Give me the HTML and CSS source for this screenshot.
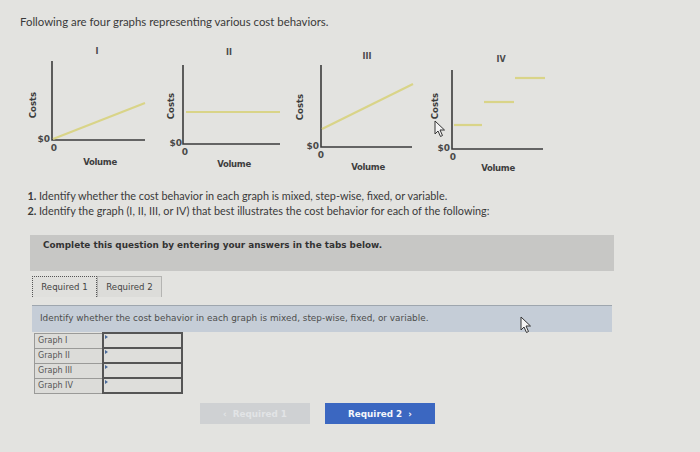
FILE: index.html
```html
<!DOCTYPE html>
<html>
<head>
<meta charset="utf-8">
<link rel="stylesheet" href="styles.css">
</head>
<body>
<div class="page">
  <p class="title">Following are four graphs representing various cost behaviors.</p>
  <svg class="figure" width="700" height="150" viewBox="0 30 700 150" xmlns="http://www.w3.org/2000/svg">
    <g class="axis" fill="none" stroke="#3b3b3b" stroke-width="1.6">
      <polyline points="52,61 52,140 145,140"/>
      <polyline points="183,65 183,144 280,144"/>
      <polyline points="321,65 321,147 412,147"/>
      <polyline points="452,70 452,149 543,149"/>
    </g>
    <g fill="none" stroke="#d9d488" stroke-width="2.2">
      <line x1="53" y1="139" x2="145" y2="103"/>
      <line x1="186" y1="112" x2="280" y2="112"/>
      <line x1="322" y1="129" x2="413" y2="84"/>
      <line x1="454" y1="125" x2="482" y2="125"/>
      <line x1="484" y1="102" x2="514" y2="102"/>
      <line x1="515" y1="78" x2="545" y2="78"/>
    </g>
    <g class="num" font-family="'DejaVu Sans', sans-serif" font-weight="bold" font-size="8" fill="#4a4a4a">
      <text x="97" y="54" text-anchor="middle">I</text>
      <text x="229" y="55" text-anchor="middle">II</text>
      <text x="367" y="59" text-anchor="middle">III</text>
      <text x="501" y="62" text-anchor="middle">IV</text>
    </g>
    <g font-family="'DejaVu Sans', sans-serif" font-weight="bold" font-size="8.5" fill="#3d3d3d">
      <text transform="translate(36,105) rotate(-90)" text-anchor="middle">Costs</text>
      <text transform="translate(174,106) rotate(-90)" text-anchor="middle">Costs</text>
      <text transform="translate(303,107) rotate(-90)" text-anchor="middle">Costs</text>
      <text transform="translate(438,106) rotate(-90)" text-anchor="middle">Costs</text>
      <text x="100" y="165" text-anchor="middle" letter-spacing="-0.3">Volume</text>
      <text x="234" y="167" text-anchor="middle" letter-spacing="-0.3">Volume</text>
      <text x="368" y="170" text-anchor="middle" letter-spacing="-0.3">Volume</text>
      <text x="498" y="171" text-anchor="middle" letter-spacing="-0.3">Volume</text>
    </g>
    <g font-family="'DejaVu Sans', sans-serif" font-weight="bold" font-size="9" fill="#4a4a4a">
      <text x="50" y="142" text-anchor="end">$0</text>
      <text x="54" y="151" text-anchor="middle">0</text>
      <text x="182" y="146" text-anchor="end">$0</text>
      <text x="185" y="155" text-anchor="middle">0</text>
      <text x="319" y="149" text-anchor="end">$0</text>
      <text x="321" y="158" text-anchor="middle">0</text>
      <text x="450" y="151" text-anchor="end">$0</text>
      <text x="453" y="160" text-anchor="middle">0</text>
    </g>
  </svg>
  <ol class="steps">
    <li>Identify whether the cost behavior in each graph is mixed, step-wise, fixed, or variable.</li>
    <li>Identify the graph (I, II, III, or IV) that best illustrates the cost behavior for each of the following:</li>
  </ol>
  <div class="panel">Complete this question by entering your answers in the tabs below.</div>
  <div class="tabs">
    <div class="tab active">Required 1</div>
    <div class="tab">Required 2</div>
  </div>
  <div class="prompt">Identify whether the cost behavior in each graph is mixed, step-wise, fixed, or variable.</div>
  <table class="answers">
    <tr><td class="lbl">Graph I</td><td class="inp"><span class="mark"></span></td></tr>
    <tr><td class="lbl">Graph II</td><td class="inp"><span class="mark"></span></td></tr>
    <tr><td class="lbl">Graph III</td><td class="inp"><span class="mark"></span></td></tr>
    <tr><td class="lbl">Graph IV</td><td class="inp"><span class="mark"></span></td></tr>
  </table>
  <div class="nav">
    <div class="btn prev">&lsaquo;&nbsp; Required 1</div>
    <div class="btn next">Required 2 &nbsp;&rsaquo;</div>
  </div>
  <svg class="cursor c1" width="12" height="18" viewBox="0 0 12 18"><path d="M1 1 L1 14 L4 11 L6.5 16.5 L8.5 15.5 L6 10 L10.5 10 Z" fill="#f4f4f4" stroke="#333" stroke-width="1"/></svg>
  <svg class="cursor c2" width="12" height="18" viewBox="0 0 12 18"><path d="M1 1 L1 14 L4 11 L6.5 16.5 L8.5 15.5 L6 10 L10.5 10 Z" fill="#f4f4f4" stroke="#333" stroke-width="1"/></svg>
</div>
</body>
</html>
```
FILE: styles.css
```css
html, body {
  margin: 0;
  padding: 0;
}
body {
  background: #e3e3e0;
  width: 700px;
  height: 452px;
  overflow: hidden;
  font-family: Lato, "Open Sans", sans-serif;
  color: #333;
}
.page {
  position: relative;
  width: 700px;
  height: 452px;
}
.title {
  margin: 0;
  padding: 15px 0 0 20px;
  font-size: 11.4px;
  line-height: 13px;
  color: #3a3a3a;
}
.figure {
  display: block;
  margin-top: 2px;
}
.steps {
  margin: 8px 0 0 0;
  padding: 0 0 0 39px;
  font-size: 10.85px;
  line-height: 15px;
  color: #3a3a3a;
}
.steps li::marker {
  font-weight: bold;
}
.panel {
  margin: 17px 0 0 30px;
  width: 571px;
  height: 32px;
  padding: 4px 0 0 13px;
  background: #c7c7c5;
  font-family: "DejaVu Sans", Verdana, sans-serif;
  font-weight: bold;
  font-size: 8.85px;
  line-height: 12px;
  color: #333;
}
.tabs {
  display: flex;
  margin: 5px 0 0 32px;
  height: 22px;
}
.tab {
  width: 63px;
  height: 20px;
  display: flex;
  align-items: center;
  justify-content: center;
  font-family: "DejaVu Sans", Verdana, sans-serif;
  font-size: 8.6px;
  color: #444;
  background: #dcdcd9;
  border: 1px solid #b4b4b2;
  border-bottom: none;
}
.tab.active {
  border: 1px dotted #555;
  border-bottom: none;
  background: #e0e0dd;
}
.prompt {
  margin: 7px 0 0 32px;
  width: 572px;
  height: 26px;
  padding-left: 8px;
  border-top: 1px solid #9ea6ae;
  background: #c5cdd7;
  font-family: "DejaVu Sans", Verdana, sans-serif;
  font-size: 8.9px;
  line-height: 24px;
  color: #4d4d4d;
}
.answers {
  margin: 0 0 0 34px;
  border-collapse: collapse;
}
.answers td {
  height: 13px;
  padding: 0;
}
.lbl {
  width: 64px;
  border: 1px solid #9a9a98;
  padding-left: 3px !important;
  font-family: "DejaVu Sans", Verdana, sans-serif;
  font-size: 8px;
  color: #555;
  background: #dcdcd9;
}
.inp {
  position: relative;
  width: 77px;
  border: 2px solid #555;
  background: #dededb;
}
.mark {
  position: absolute;
  left: 1px;
  top: 1px;
  width: 0;
  height: 0;
  border-left: 3px solid #4a6a9a;
  border-top: 2px solid transparent;
  border-bottom: 2px solid transparent;
}
.nav {
  display: flex;
  gap: 15px;
  margin: 9px 0 0 200px;
}
.btn {
  width: 110px;
  height: 21px;
  display: flex;
  align-items: center;
  justify-content: center;
  font-family: "DejaVu Sans", Verdana, sans-serif;
  font-weight: bold;
  font-size: 8.8px;
}
.prev {
  background: #cfd1d3;
  color: #e2e4e6;
}
.next {
  background: #3b67c1;
  color: #f4f6fb;
}
.cursor {
  position: absolute;
}
.c1 {
  left: 434px;
  top: 120px;
}
.c2 {
  left: 520px;
  top: 316px;
}
```
